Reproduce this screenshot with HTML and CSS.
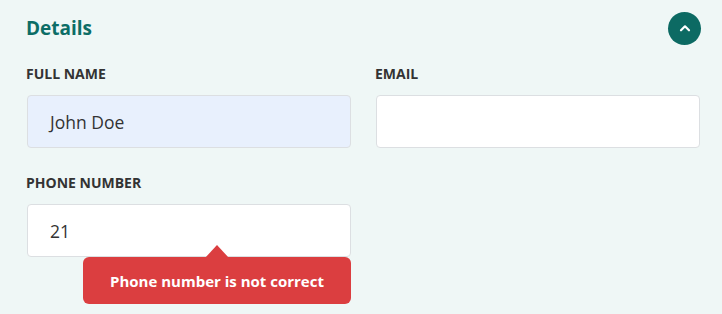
FILE: index.html
```html
<!DOCTYPE html>
<html>
<head>
<meta charset="utf-8">
<link rel="stylesheet" href="styles.css">
</head>
<body>
<div class="panel">
  <div class="header">
    <h2 class="title">Details</h2>
    <button class="toggle" aria-label="Collapse">
      <svg width="14" height="10" viewBox="0 0 14 10"><path d="M3 7.3 L7 3.3 L11 7.3" fill="none" stroke="#fff" stroke-width="2.2" stroke-linecap="round" stroke-linejoin="round"/></svg>
    </button>
  </div>
  <div class="grid">
    <div class="field">
      <label class="label">FULL NAME</label>
      <div class="input autofill">John Doe</div>
    </div>
    <div class="field">
      <label class="label">EMAIL</label>
      <div class="input"></div>
    </div>
    <div class="field">
      <label class="label">PHONE NUMBER</label>
      <div class="input">21</div>
      <div class="tooltip">Phone number is not correct</div>
    </div>
  </div>
</div>
</body>
</html>
```
FILE: styles.css
```css
html, body {
  margin: 0;
  padding: 0;
}
body {
  background: #eff7f6;
  font-family: "Open Sans", "Noto Sans", sans-serif;
  width: 722px;
  height: 314px;
  overflow: hidden;
}
.panel {
  padding: 0 22px 0 27px;
}
.header {
  height: 56px;
  display: flex;
  align-items: center;
  justify-content: space-between;
}
.title {
  margin: 0 0 0 -1px;
  font-size: 19px;
  font-weight: 700;
  color: #0c6d66;
}
.toggle {
  width: 33px;
  height: 33px;
  border-radius: 50%;
  border: none;
  background: #0c6a63;
  padding: 0;
  display: flex;
  align-items: center;
  justify-content: center;
  margin-right: -1px;
}
.grid {
  margin-top: 8px;
  display: grid;
  grid-template-columns: 324px 324px;
  column-gap: 25px;
  row-gap: 25px;
}
.field {
  position: relative;
  display: flex;
  flex-direction: column;
}
.label {
  height: 20px;
  line-height: 20px;
  font-size: 14px;
  font-weight: 700;
  color: #333;
  margin-left: -1px;
  margin-bottom: 11px;
}
.input {
  box-sizing: border-box;
  height: 53px;
  background: #fff;
  border: 1px solid #dcdfe2;
  border-radius: 4px;
  padding-left: 22px;
  display: flex;
  align-items: center;
  font-size: 17.5px;
  color: #333;
}
.input.autofill {
  background: #e8f0fd;
}
.tooltip {
  position: absolute;
  left: 56px;
  right: 0;
  top: 84px;
  height: 47px;
  background: #db3e40;
  border-radius: 6px;
  color: #fff;
  font-size: 15px;
  font-weight: 700;
  display: flex;
  align-items: center;
  justify-content: center;
}
.tooltip::before {
  content: "";
  position: absolute;
  left: 50%;
  top: -12px;
  margin-left: -12px;
  border-left: 12px solid transparent;
  border-right: 12px solid transparent;
  border-bottom: 13px solid #db3e40;
}
```
